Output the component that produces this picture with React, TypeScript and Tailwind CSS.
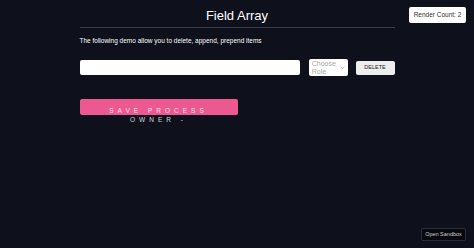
export default function App() {
  return (
    <div className="relative min-h-[248px] bg-[#0e101c] font-['Liberation_Sans',Arial,sans-serif] text-white">
      <div className="mx-auto w-[315px] pt-[7px]">
        <h1 className="text-center text-[13px] leading-[17px]">Field Array</h1>
        <hr className="mt-[3px] border-[#3b3e4a]" />
        <p className="mt-[9px] text-[6.5px] leading-[8px]">
          The following demo allow you to delete, append, prepend items
        </p>

        <form className="mt-[14px]">
          <div className="flex items-center">
            <input className="h-[15px] w-[221px] rounded-[2px] bg-white" />
            <div className="ml-[9px] flex h-[17px] w-[39px] items-center rounded-[2px] bg-white pl-[3px] pr-[3px]">
              <span className="text-[7px] leading-[8px] text-[#a8a8a8]">
                Choose
                <br />
                Role
              </span>
              <svg viewBox="0 0 10 6" className="ml-auto h-[3px] w-[5px]" fill="none" stroke="#b5b5b5" strokeWidth="1.4">
                <path d="M1 1l4 4 4-4" />
              </svg>
            </div>
            <button
              type="button"
              className="ml-[8px] h-[14px] w-[39px] rounded-[2px] bg-[#eeeeee] text-[5.5px] text-[#222]"
            >
              DELETE
            </button>
          </div>

          <button
            type="button"
            className="mt-[23px] block h-[16px] w-[158px] rounded-[2px] bg-[#ec5990] px-[20px] pt-[7px] text-center text-[6.5px] uppercase leading-[9px] tracking-[4px] text-white/80"
          >
            Save Process Owner -
          </button>
        </form>
      </div>

      <div className="absolute right-[8px] top-[7px] flex h-[16px] w-[57px] items-center justify-center rounded-[2px] bg-white text-[6.5px] text-[#333]">
        Render Count: 2
      </div>

      <div className="absolute bottom-[7px] right-[8px] flex h-[13px] w-[45px] items-center justify-center whitespace-nowrap rounded-[2px] border border-[#2a2c36] bg-[#08090f] text-[5.5px] text-[#cfcfcf]">
        Open Sandbox
      </div>
    </div>
  );
}
